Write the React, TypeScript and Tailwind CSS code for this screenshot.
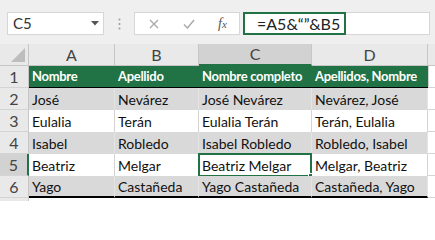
import React from "react";

const rows: string[][] = [
  ["José", "Nevárez", "José Nevárez", "Nevárez, José"],
  ["Eulalia", "Terán", "Eulalia Terán", "Terán, Eulalia"],
  ["Isabel", "Robledo", "Isabel Robledo", "Robledo, Isabel"],
  ["Beatriz", "Melgar", "Beatriz Melgar", "Melgar, Beatriz"],
  ["Yago", "Castañeda", "Yago Castañeda", "Castañeda, Yago"],
];

const colW = ["w-[86px]", "w-[84px]", "w-[113px]", "w-[116px]"];

function RowHeader({ n, active }: { n: number; active?: boolean }) {
  return (
    <div
      className={
        "w-[29px] shrink-0 flex items-center justify-center border-b border-[#d4d4d4] text-[16px] text-[#444] " +
        (active ? "bg-[#d2d2d2] border-r-2 border-r-[#217346]" : "bg-[#e9e9e9] border-r border-r-[#c6c6c6]")
      }
    >
      {n}
    </div>
  );
}

export default function App() {
  return (
    <div className="w-[435px] h-[201px] overflow-hidden bg-[#efefef] font-[Lato,'Noto_Sans',sans-serif] select-none">
      {/* Formula bar */}
      <div className="h-[44px] flex items-start pt-[12px]">
        <div className="ml-[7px] w-[97px] h-[23px] bg-white border border-[#d6d6d6] flex items-center justify-between pl-[5px] pr-[4px]">
          <span className="text-[15px] text-[#333]">C5</span>
          <svg width="8" height="5" viewBox="0 0 8 5">
            <path d="M0 0 L8 0 L4 4.5 Z" fill="#555" />
          </svg>
        </div>
        <div className="w-[30px] h-[23px] flex items-center justify-center">
          <svg width="3" height="12" viewBox="0 0 3 12">
            <circle cx="1.5" cy="1.5" r="1" fill="#9a9a9a" />
            <circle cx="1.5" cy="6" r="1" fill="#9a9a9a" />
            <circle cx="1.5" cy="10.5" r="1" fill="#9a9a9a" />
          </svg>
        </div>
        <div className="w-[106px] h-[23px] bg-white border border-[#d6d6d6] flex items-center">
          <svg width="10" height="10" viewBox="0 0 10 10" className="ml-[14px]">
            <path d="M1 1 L9 9 M9 1 L1 9" stroke="#a8a8a8" strokeWidth="1.3" />
          </svg>
          <svg width="12" height="10" viewBox="0 0 12 10" className="ml-[24px]">
            <path d="M1 5.5 L4.5 9 L11 1" stroke="#a8a8a8" strokeWidth="1.4" fill="none" />
          </svg>
          <span className="ml-[23px] text-[14px] italic text-[#555] font-['Liberation_Serif',serif]">
            f<span className="text-[11px]">x</span>
          </span>
        </div>
        <div className="ml-[3px] w-[103px] h-[23px] bg-white border-2 border-[#217346] flex items-center pl-[12px]">
          <span className="text-[16px] text-[#222] whitespace-nowrap">=A5&amp;“”&amp;B5</span>
        </div>
        <div className="w-[84px] h-[23px] bg-white border-y border-r border-[#d6d6d6]" />
      </div>

      {/* Column headers */}
      <div className="flex h-[22px]">
        <div className="w-[29px] shrink-0 bg-[#e9e9e9] border-r border-b border-[#c6c6c6] flex items-end justify-end p-[3px]">
          <svg width="14" height="14" viewBox="0 0 14 14">
            <path d="M14 0 L14 14 L0 14 Z" fill="#bdbdbd" />
          </svg>
        </div>
        {["A", "B", "C", "D"].map((c, i) => (
          <div
            key={c}
            className={
              colW[i] +
              " shrink-0 flex items-center justify-center text-[16px] text-[#444] border-r border-[#c6c6c6] " +
              (c === "C" ? "bg-[#d2d2d2] border-b-2 border-b-[#217346]" : "bg-[#e9e9e9] border-b border-b-[#c6c6c6]")
            }
          >
            {c}
          </div>
        ))}
        <div className="flex-1 bg-[#e9e9e9] border-b border-[#c6c6c6]" />
      </div>

      {/* Row 1: table header */}
      <div className="flex h-[22px]">
        <RowHeader n={1} />
        {["Nombre", "Apellido", "Nombre completo", "Apellidos, Nombre"].map((t, i) => (
          <div
            key={t}
            className={
              colW[i] +
              " shrink-0 overflow-hidden whitespace-nowrap bg-[#217346] text-white font-bold text-[13px] tracking-[-0.3px] flex items-center pl-[3px] border-b border-black"
            }
          >
            {t}
          </div>
        ))}
        <div className="flex-1 bg-white border-b border-[#d4d4d4] border-l border-l-[#d4d4d4]" />
      </div>

      {/* Data rows */}
      {rows.map((r, ri) => {
        const gray = ri % 2 === 0;
        const isLast = ri === rows.length - 1;
        return (
          <div key={ri} className="flex h-[22px]">
            <RowHeader n={ri + 2} active={ri === 3} />
            {r.map((t, ci) => (
              <div
                key={ci}
                className={
                  colW[ci] +
                  " relative shrink-0 whitespace-nowrap flex items-center pl-[3px] text-[14px] text-[#111] border-r " +
                  (gray ? "bg-[#d9d9d9] border-r-[#e4e4e4] " : "bg-white border-r-[#d4d4d4] ") +
                  (isLast ? "border-b-2 border-b-black" : "")
                }
              >
                {t}
                {ri === 3 && ci === 2 && (
                  <div className="absolute -left-[1px] -top-[1px] -right-[1px] -bottom-[1px] border-2 border-[#217346]">
                    <div className="absolute -right-[4px] -bottom-[4px] w-[6px] h-[6px] bg-[#217346] border border-white" />
                  </div>
                )}
              </div>
            ))}
            <div className="flex-1 bg-white border-b border-[#d4d4d4]" />
          </div>
        );
      })}
      <div className="flex h-[10px]">
        <div className="w-[29px] shrink-0 bg-[#e9e9e9] border-r border-[#c6c6c6]" />
        <div className="flex-1 bg-white" />
      </div>
    </div>
  );
}
